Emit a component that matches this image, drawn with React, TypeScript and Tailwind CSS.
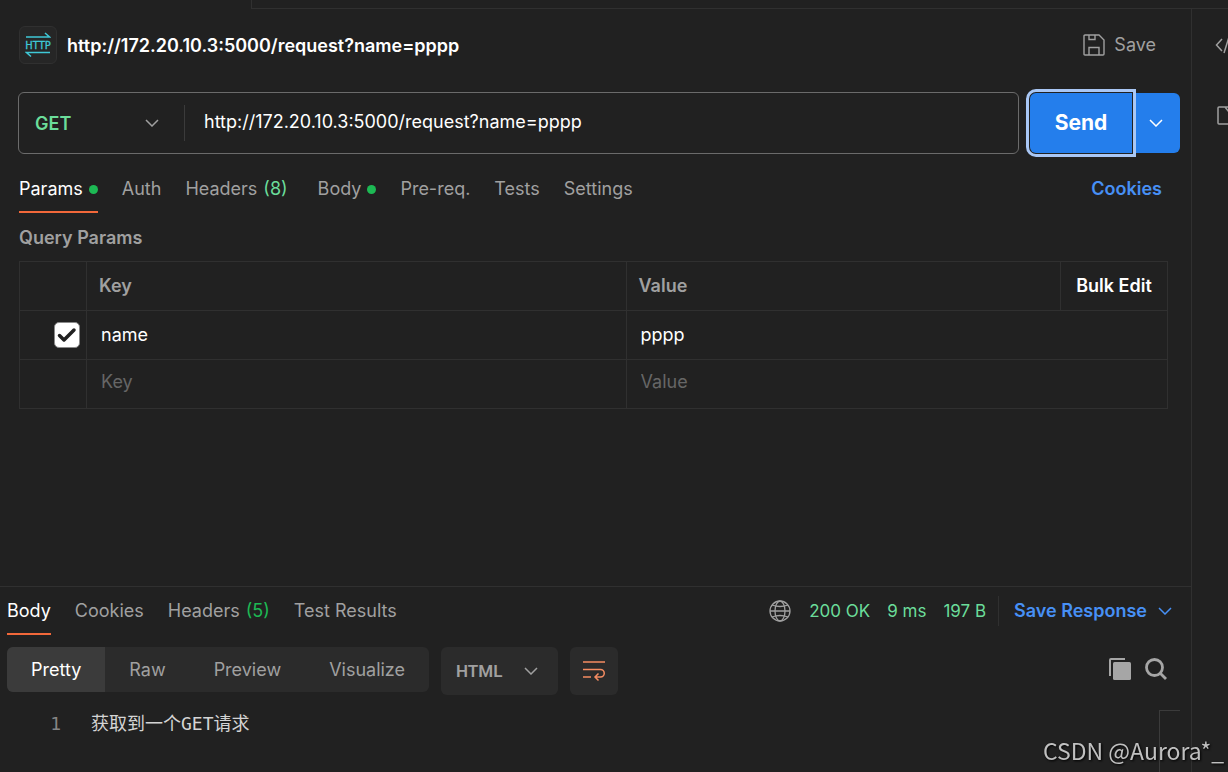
import React from 'react';

const requestTabs = [
  { label: 'Params', dot: true, active: true },
  { label: 'Auth' },
  { label: 'Headers', count: '(8)' },
  { label: 'Body', dot: true },
  { label: 'Pre-req.' },
  { label: 'Tests' },
  { label: 'Settings' },
];

const responseTabs = [
  { label: 'Body', active: true },
  { label: 'Cookies' },
  { label: 'Headers', count: '(5)' },
  { label: 'Test Results' },
];

const views = ['Pretty', 'Raw', 'Preview', 'Visualize'];

const Chevron: React.FC<{ className?: string }> = ({ className }) => (
  <svg className={className} width="14" height="8" viewBox="0 0 14 8" fill="none" stroke="currentColor" strokeWidth="1.5">
    <path d="M1 1l6 6 6-6" />
  </svg>
);

const HttpBadge = () => (
  <div className="flex h-[38px] w-[38px] shrink-0 items-center justify-center rounded-md border border-[#303030] bg-[#262626]">
    <svg width="26" height="26" viewBox="0 0 26 26" fill="none" stroke="#3fc8d6" strokeWidth="1.5">
      <path d="M1 5h23.5L20 1M25 20.500H1.5L6 24.500" />
      <text x="13" y="17" textAnchor="middle" fontSize="11" fill="#3fc8d6" stroke="#3fc8d6" strokeWidth="0.3" className="font-['DejaVu_Sans_Condensed','DejaVu_Sans',sans-serif]">HTTP</text>
    </svg>
  </div>
);

const SaveIcon = () => (
  <svg width="22" height="22" viewBox="0 0 22 22" fill="none" stroke="currentColor" strokeWidth="1.4">
    <path d="M1 2q0-1 1-1h14l5 5v14q0 1-1 1H2q-1 0-1-1z" />
    <path d="M6 1v4.500h6V1M6 21v-7.500h10V21" />
  </svg>
);

const GlobeIcon = () => (
  <svg width="22" height="22" viewBox="0 0 22 22" fill="none" stroke="#a0a0a0" strokeWidth="1.3">
    <circle cx="11" cy="11" r="10" />
    <ellipse cx="11" cy="11" rx="5" ry="10" />
    <path d="M3 5q8 3 16 0M1 11h20M3 17q8-3 16 0" />
  </svg>
);

const WrapIcon = () => (
  <svg width="24" height="22" viewBox="0 0 24 22" fill="none" stroke="#f58c62" strokeWidth="1.5">
    <path d="M1 2h22M1 9.500h17.500a3.700 3.700 0 0 1 0 7.500H13M1 17h8M16.500 13.500L13 17l3.500 3.500" />
  </svg>
);

const App: React.FC = () => {
  return (
    <div className="flex min-h-screen flex-col overflow-hidden bg-[#212121] font-['Inter',sans-serif] text-lg leading-6 text-[#a0a0a0]">
      <div className="flex h-[9px]">
        <div className="w-[252px] border-r border-[#303030]"></div>
        <div className="flex-1 border-b border-[#303030]"></div>
      </div>

      <div className="flex flex-1">
        <main className="flex min-w-0 flex-1 flex-col">
          {/* Request */}
          <section className="flex-1 pr-[11px] pl-[18px]">
            <header className="flex h-[74px] items-center justify-between pr-6 pb-[2px]">
              <div className="flex items-center gap-[10px] pl-px">
                <HttpBadge />
                <h1 className="pt-[2px] font-semibold text-white">http://172.20.10.3:5000/request?name=pppp</h1>
              </div>
              <button className="flex items-center gap-[9px]">
                <SaveIcon />
                Save
              </button>
            </header>

            <div className="mt-[9px] flex h-[62px] items-center gap-[11px]">
              <div className="flex h-full flex-1 items-center rounded-md border border-[#6b6b6b]">
                <button className="flex h-9 w-[166px] items-center justify-between border-r border-[#3b3b3b] pr-[25px] pl-4 font-semibold text-[#6bdd9a]">
                  <span className="pt-[2px]">GET</span>
                  <Chevron className="text-[#a0a0a0]" />
                </button>
                <input aria-label="Request URL" defaultValue="http://172.20.10.3:5000/request?name=pppp" className="min-w-0 flex-1 bg-transparent px-[19px] pb-[2px] text-white outline-none" />
              </div>
              <div className="flex h-[60px]">
                <button className="relative z-10 w-[102px] rounded-l-md bg-[#247eec] text-[21px] font-bold text-white ring-1 ring-[#212121] outline-3 outline-offset-1 outline-[#a9c7f5]">Send</button>
                <button aria-label="Send options" className="flex w-12 items-center justify-center rounded-r-md bg-[#247eec] text-white">
                  <Chevron />
                </button>
              </div>
            </div>

            <div className="mr-[18px] flex h-[59px] justify-between pl-px">
              <nav className="flex gap-6">
                {requestTabs.map((tab) => (
                  <button
                    key={tab.label}
                    className={tab.active ? 'flex items-center gap-[6px] border-b-2 border-[#f2683a] pt-[13px] text-white' : 'flex items-center gap-[6px] border-b-2 border-transparent pt-[13px]'}
                  >
                    {tab.label}
                    {tab.dot && <span className="h-[9px] w-[9px] rounded-full bg-[#1db954]"></span>}
                    {tab.count && <span className="pr-[6px] text-[#6bdd9a]">{tab.count}</span>}
                  </button>
                ))}
              </nav>
              <a href="#cookies" className="pt-[23px] font-semibold text-[#4790f5]">Cookies</a>
            </div>

            <h2 className="mt-[13px] pl-px font-semibold">Query Params</h2>
            <div className="mt-[11px] mr-3 ml-px">
              <table className="w-full table-fixed border-collapse text-left">
                <colgroup>
                  <col className="w-[67px]" />
                  <col className="w-[47%]" />
                  <col />
                  <col className="w-[107px]" />
                </colgroup>
                <thead>
                  <tr className="h-[49px]">
                    <th className="border border-[#303030]"></th>
                    <th className="border border-[#303030] px-3 font-semibold">Key</th>
                    <th className="border border-[#303030] px-3 font-semibold">Value</th>
                    <th className="border border-[#303030] text-center">
                      <button className="font-semibold text-white">Bulk Edit</button>
                    </th>
                  </tr>
                </thead>
                <tbody>
                  <tr className="h-[49px]">
                    <td className="border border-[#303030]">
                      <label className="relative ml-[34px] block h-[26px] w-[26px]">
                        <input type="checkbox" defaultChecked aria-label="Enable name" className="block h-[26px] w-[26px] appearance-none rounded-[5px] border border-[#8a8a8a] bg-white" />
                        <svg className="absolute inset-0" width="26" height="26" viewBox="0 0 26 26" fill="none" stroke="#212121" strokeWidth="3.500" strokeLinecap="round" strokeLinejoin="round">
                          <path d="M5.500 13.500l4.500 4.500L20 8" />
                        </svg>
                      </label>
                    </td>
                    <td className="border border-[#303030] px-[14px]">
                      <input aria-label="Key 1" defaultValue="name" className="w-full bg-transparent text-white outline-none" />
                    </td>
                    <td colSpan={2} className="border border-[#303030] px-[14px]">
                      <input aria-label="Value 1" defaultValue="pppp" className="w-full bg-transparent text-white outline-none" />
                    </td>
                  </tr>
                  <tr className="h-[49px]">
                    <td className="border border-[#303030]"></td>
                    <td className="border border-[#303030] px-[14px] pb-1">
                      <input aria-label="New key" placeholder="Key" className="w-full bg-transparent outline-none placeholder:text-[#666666]" />
                    </td>
                    <td colSpan={2} className="border border-[#303030] px-[14px] pb-1">
                      <input aria-label="New value" placeholder="Value" className="w-full bg-transparent outline-none placeholder:text-[#666666]" />
                    </td>
                  </tr>
                </tbody>
              </table>
            </div>
          </section>

          {/* Response */}
          <section className="flex min-h-[186px] flex-col border-t border-[#303030]">
            <div className="flex h-12 justify-between pr-[19px] pl-[7px]">
              <nav className="flex gap-6">
                {responseTabs.map((tab) => (
                  <button
                    key={tab.label}
                    className={tab.active ? 'flex items-center gap-[6px] border-b-2 border-[#f2683a] pt-[2px] text-white' : 'flex items-center gap-[6px] border-b-2 border-transparent pt-[2px]'}
                  >
                    {tab.label}
                    {tab.count && <span className="text-[#1db954]">{tab.count}</span>}
                  </button>
                ))}
              </nav>
              <div className="flex items-center text-[17px] text-[#6bdd9a]">
                <GlobeIcon />
                <span className="ml-[18px]">200 OK</span>
                <span className="ml-[17px]">9 ms</span>
                <span className="ml-[17px]">197 B</span>
                <button className="ml-3 flex h-[30px] items-center gap-[11px] border-l border-[#303030] pl-[15px] text-lg leading-6 font-semibold text-[#4790f5]">
                  Save Response
                  <Chevron />
                </button>
              </div>
            </div>

            <div className="mt-3 flex items-start pr-6 pl-[7px]">
              <div className="flex h-[45px] overflow-hidden rounded-md bg-[#2b2b2b]">
                {views.map((view) => (
                  <button key={view} className={view === 'Pretty' ? 'bg-[#3b3b3b] px-6 text-white' : 'px-6'}>
                    {view}
                  </button>
                ))}
              </div>
              <button className="ml-3 flex h-12 w-[117px] items-center justify-between rounded-md bg-[#2b2b2b] pr-5 pl-[15px] font-['Roboto',sans-serif] text-[17px] font-semibold">
                HTML
                <Chevron />
              </button>
              <button aria-label="Wrap lines" className="ml-3 flex h-12 w-12 items-center justify-center rounded-md bg-[#2b2b2b]">
                <WrapIcon />
              </button>
              <div className="ml-auto flex gap-[14px] pt-[11px]">
                <button aria-label="Copy">
                  <svg width="22" height="22" viewBox="0 0 22 22" fill="#a6a6a6">
                    <rect x="4" y="4" width="18" height="18" rx="1.500" />
                    <path d="M0 2q0-2 2-2h14v2H2v16H0z" />
                  </svg>
                </button>
                <button aria-label="Search">
                  <svg width="22" height="22" viewBox="0 0 22 22" fill="none" stroke="#a6a6a6" strokeWidth="2.800">
                    <circle cx="9.500" cy="9.500" r="8" />
                    <path d="M15 15l6 6" />
                  </svg>
                </button>
              </div>
            </div>

            <div className="mt-[15px] flex flex-1 justify-between pr-[11px] font-['DejaVu_Sans_Mono','Noto_Sans_CJK_SC',monospace]">
              <div className="flex h-7 items-center">
                <span className="w-[61px] text-right text-[#858585]">1</span>
                <code className="ml-[30px] font-['DejaVu_Sans_Mono','Noto_Sans_CJK_SC',monospace] text-[#d4d4d4]">获取到一个GET请求</code>
              </div>
              <div className="w-[21px] border-t border-[#3b3b3b]">
                <div className="h-full border-l border-[#3b3b3b]"></div>
              </div>
            </div>
          </section>
        </main>

        <aside className="flex w-[37px] flex-col gap-12 overflow-hidden border-l border-[#303030] pt-[25px] pl-[23px]">
          <button aria-label="Code snippet">
            <svg width="26" height="22" viewBox="0 0 26 22" fill="none" stroke="#a0a0a0" strokeWidth="1.500">
              <path d="M7 5L1.500 11 7 17M9 19l5-16M19 5l5.500 6L19 17" />
            </svg>
          </button>
          <button aria-label="Documentation">
            <svg width="22" height="24" viewBox="0 0 22 24" fill="none" stroke="#a0a0a0" strokeWidth="1.500">
              <path d="M16 3H4Q3 3 3 4v15q0 1 1 1h12q1 0 1-1V9zM10 3l4 5h3" />
            </svg>
          </button>
        </aside>
      </div>

      <div className="absolute right-1 bottom-[6px] font-['Noto_Sans_CJK_SC',sans-serif] text-[23px] leading-8 text-[#c0c0c0] drop-shadow-[1px_1px_1px_#000000]">CSDN @Aurora*_</div>
    </div>
  );
};

export default App;
